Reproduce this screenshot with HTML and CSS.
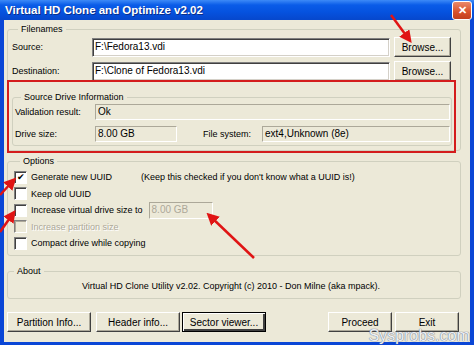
FILE: index.html
```html
<!DOCTYPE html>
<html lang="en">
<head>
    <meta charset="UTF-8">
    <title>Virtual HD Clone and Optimize v2.02</title>
    <link rel="stylesheet" href="styles.css">
</head>
<body>
    <div class="window">
        <div class="titlebar">
            <span class="title">Virtual HD Clone and Optimize v2.02</span>
            <span class="close">&#x2715;</span>
        </div>
        <div class="client">
            <fieldset class="group files">
                <legend>Filenames</legend>
                <div class="row src">
                    <span class="label">Source:</span>
                    <span class="textbox path">F:\Fedora13.vdi</span>
                    <span class="button browse">Browse...</span>
                </div>
                <div class="row dst">
                    <span class="label">Destination:</span>
                    <span class="textbox path">F:\Clone of Fedora13.vdi</span>
                    <span class="button browse">Browse...</span>
                </div>
                <fieldset class="group info">
                    <legend>Source Drive Information</legend>
                    <div class="row">
                        <span class="label">Validation result:</span>
                        <span class="textbox readonly wide">Ok</span>
                    </div>
                    <div class="row size-row">
                        <span class="label">Drive size:</span>
                        <span class="textbox readonly small">8.00 GB</span>
                        <span class="label fs-label">File system:</span>
                        <span class="textbox readonly fs">ext4,Unknown (8e)</span>
                    </div>
                </fieldset>
            </fieldset>

            <fieldset class="group options">
                <legend>Options</legend>
                <div class="check-row">
                    <span class="checkbox checked">&#x2714;</span>
                    <span class="check-label">Generate new UUID</span>
                    <span class="hint">(Keep this checked if you don't know what a UUID is!)</span>
                </div>
                <div class="check-row">
                    <span class="checkbox"></span>
                    <span class="check-label">Keep old UUID</span>
                </div>
                <div class="check-row">
                    <span class="checkbox"></span>
                    <span class="check-label">Increase virtual drive size to</span>
                    <span class="textbox disabled-box">8.00 GB</span>
                </div>
                <div class="check-row disabled">
                    <span class="checkbox"></span>
                    <span class="check-label">Increase partition size</span>
                </div>
                <div class="check-row">
                    <span class="checkbox"></span>
                    <span class="check-label">Compact drive while copying</span>
                </div>
            </fieldset>

            <fieldset class="group about">
                <legend>About</legend>
                <div class="about-text">Virtual HD Clone Utility v2.02. Copyright (c) 2010 - Don Milne (aka mpack).</div>
            </fieldset>

            <div class="buttons">
                <span class="button cmd">Partition Info...</span>
                <span class="button cmd">Header info...</span>
                <span class="button cmd default">Sector viewer...</span>
                <span class="spacer"></span>
                <span class="button cmd short">Proceed</span>
                <span class="button cmd short">Exit</span>
            </div>
        </div>

        <!-- annotations drawn on top of the screenshot -->
        <div class="highlight"></div>
        <svg class="arrows" width="474" height="345" viewBox="0 0 474 345">
            <defs>
                <marker id="head" markerWidth="5" markerHeight="5" refX="2.5" refY="2.5" orient="auto" markerUnits="strokeWidth">
                    <path d="M0,0 L5,2.5 L0,5 Z" fill="#e01414"/>
                </marker>
            </defs>
            <line x1="391" y1="15" x2="408" y2="38" stroke="#e01414" stroke-width="2.5" marker-end="url(#head)"/>
            <line x1="0" y1="195" x2="12" y2="182" stroke="#e01414" stroke-width="2.5" marker-end="url(#head)"/>
            <line x1="0" y1="232" x2="12" y2="215" stroke="#e01414" stroke-width="2.5" marker-end="url(#head)"/>
            <line x1="254" y1="258" x2="211" y2="217" stroke="#e01414" stroke-width="2.5" marker-end="url(#head)"/>
        </svg>
        <div class="watermark">Sysprobs.com</div>
    </div>
</body>
</html>
```

FILE: styles.css
```css
body {
    margin: 0;
    font-family: "Liberation Sans", Arial, sans-serif;
    font-size: 9px;
    color: #000;
}

.window {
    position: relative;
    width: 474px;
    height: 345px;
    display: flex;
    flex-direction: column;
    background-color: #0a46d6;
    overflow: hidden;
}

.titlebar {
    height: 20px;
    flex: none;
    display: flex;
    align-items: center;
    justify-content: space-between;
    padding: 0 2px 0 5px;
    background: linear-gradient(#3d8af7, #0a5ce8 25%, #0552df 60%, #0647cc);
}

.title {
    color: #fff;
    font-weight: bold;
    font-size: 11.5px;
    text-shadow: 1px 1px #0b2f8a;
}

.close {
    width: 18px;
    height: 17px;
    margin-top: 1px;
    border: 1px solid #fff;
    border-radius: 3px;
    background: linear-gradient(#e98a6a, #d8502a 60%, #c2401e);
    color: #fff;
    font-size: 11px;
    font-weight: bold;
    text-align: center;
    line-height: 17px;
}

.client {
    flex: 1;
    margin: 0 4px 3px 4px;
    padding: 4px 9px 0 3px;
    background-color: #ece9d8;
}

.group {
    margin: 0;
    padding: 0;
    min-width: 0;
    border: 1px solid #d0d0bf;
    border-radius: 3px;
    box-sizing: border-box;
}

.group legend {
    margin-left: 6px;
    padding: 0 3px;
    height: 11px;
    line-height: 11px;
}

.files {
    width: 454px;
    height: 127px;
    padding: 0 4px 0 4px;
}

.row {
    display: flex;
    align-items: center;
    height: 20px;
}

.row.src {
    margin-top: 2px;
}

.row.dst {
    margin-top: 4px;
}

.label {
    width: 80px;
    flex: none;
    white-space: nowrap;
}

.textbox {
    flex: none;
    height: 19px;
    box-sizing: border-box;
    padding: 0 2px;
    line-height: 16px;
    font-size: 10px;
    border-style: solid;
    border-width: 1px;
    border-color: #808080 #fff #fff #808080;
    box-shadow: inset 1px 1px #404040, inset -1px -1px #d4d0c8;
    background-color: #fff;
    white-space: nowrap;
    overflow: hidden;
}

.path {
    width: 298px;
}

.button {
    display: flex;
    align-items: center;
    justify-content: center;
    box-sizing: border-box;
    height: 20px;
    background-color: #ece9d8;
    border-style: solid;
    border-width: 1px;
    border-color: #fff #404040 #404040 #fff;
    box-shadow: inset -1px -1px #aca899;
    font-size: 10px;
    white-space: nowrap;
}

.browse {
    width: 57px;
    margin-left: 4px;
}

.info {
    width: 440px;
    height: 54px;
    margin-top: 11px;
    padding: 0 2px;
}

.info .row {
    height: 16px;
    margin-top: 1px;
}

.info .size-row {
    margin-top: 6px;
}

.readonly {
    height: 16px;
    line-height: 13px;
    background-color: #ece9d8;
    box-shadow: none;
    border-color: #aca899 #fff #fff #aca899;
}

.wide {
    width: 355px;
}

.small {
    width: 82px;
}

.fs-label {
    width: 59px;
    margin-left: 26px;
}

.fs {
    width: 188px;
}

.options {
    width: 454px;
    height: 100px;
    margin-top: 5px;
    padding: 0 6px;
}

.check-row {
    display: flex;
    align-items: center;
    height: 16.5px;
    white-space: nowrap;
}

.check-row:first-of-type {
    margin-top: 2px;
}

.checkbox {
    width: 13px;
    height: 13px;
    flex: none;
    box-sizing: border-box;
    border-style: solid;
    border-width: 1px;
    border-color: #808080 #fff #fff #808080;
    box-shadow: inset 1px 1px #404040;
    background-color: #fff;
    font-size: 9px;
    line-height: 11px;
    text-align: center;
}

.check-label {
    margin-left: 4px;
}

.hint {
    margin-left: 29px;
}

.disabled-box {
    width: 64px;
    height: 17px;
    line-height: 14px;
    margin-left: 6px;
    background-color: #ece9d8;
    color: #aca899;
    box-shadow: none;
    border-color: #aca899 #fff #fff #aca899;
}

.disabled .checkbox {
    background-color: #ece9d8;
    box-shadow: inset 1px 1px #aca899;
}

.disabled .check-label {
    color: #aca899;
    text-shadow: 1px 1px #fff;
}

.about {
    width: 454px;
    height: 33px;
    margin-top: 10px;
}

.about-text {
    text-align: center;
    margin-top: 4px;
    padding-right: 6px;
}

.buttons {
    display: flex;
    margin-top: 13px;
    padding-right: 2px;
}

.cmd {
    width: 84px;
    margin-right: 5px;
    font-size: 10px;
}

.cmd.default {
    margin-left: -3px;
    border: 1px solid #000;
    box-shadow: inset 1px 1px #fff, inset -2px -2px #404040;
}

.spacer {
    flex: 1;
}

.cmd.short {
    width: 64px;
    margin-right: 0;
    margin-left: 3px;
}

.highlight {
    position: absolute;
    left: 7px;
    top: 80px;
    width: 445px;
    height: 69px;
    border: 2px solid #d41c1c;
    pointer-events: none;
}

.arrows {
    position: absolute;
    left: 0;
    top: 0;
    pointer-events: none;
}

.watermark {
    position: absolute;
    right: 4px;
    bottom: 1px;
    font-size: 16px;
    line-height: 16px;
    color: #eef0f6;
    text-shadow: 0 0 1px #6d7689, 0 0 1px #6d7689;
}
```
